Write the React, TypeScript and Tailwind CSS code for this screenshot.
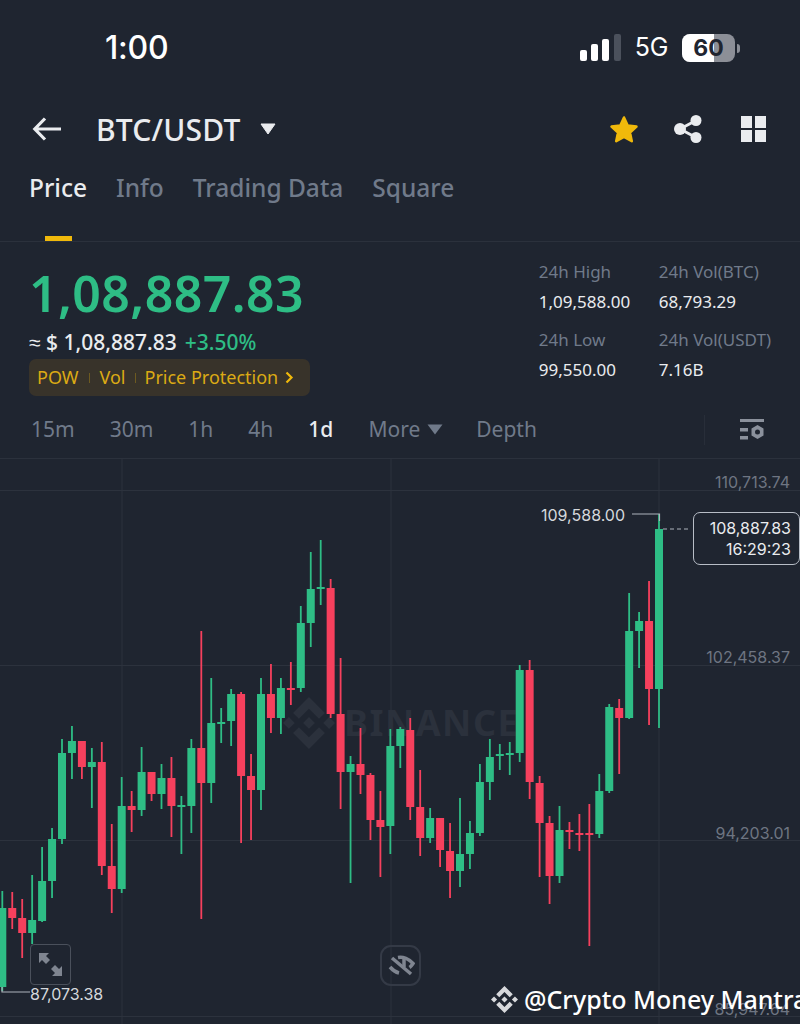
import { SiBinance } from "react-icons/si";

type C = [string, number, number, number, number];
// colour, wick top, body top, body bottom, wick bottom (page y)
const candles: C[] = [
  ["g",890,907,986,990],["r",891,907,917,928],["r",898,917,932,957],["g",874,919,932,943],
  ["g",846,880,920,921],["g",827,838,880,897],["g",738,752,838,843],["g",725,740,752,778],
  ["r",740,740,766,778],["g",747,761,766,807],["r",741,761,865,874],["r",823,865,888,912],
  ["g",776,805,888,892],["r",790,805,809,831],["g",746,771,809,815],["r",771,771,793,800],
  ["g",763,777,793,808],["r",756,777,805,836],["g",795,804,806,853],["g",738,747,805,832],
  ["r",630,747,782,918],["g",677,722,782,802],["g",707,721,723,742],["g",688,693,720,745],
  ["r",691,693,775,842],["r",753,775,789,839],["g",677,693,789,809],["r",663,693,717,732],
  ["g",677,687,717,733],["r",661,687,689,704],["g",605,622,687,691],["g",551,588,622,646],
  ["g",539,586,588,604],["r",578,587,713,717],["r",657,713,771,808],["g",755,763,771,882],
  ["r",727,763,774,793],["r",772,774,819,839],["r",790,819,826,876],["g",728,745,825,853],
  ["g",726,728,745,767],["r",717,729,806,819],["r",769,806,837,855],["g",807,817,837,842],
  ["r",817,817,849,866],["r",822,850,870,897],["g",797,853,870,886],["g",820,832,853,868],
  ["g",763,781,832,835],["g",738,756,781,799],["g",743,753,755,769],["g",741,752,754,774],
  ["g",664,669,752,761],["r",659,669,781,798],["r",775,782,822,876],["r",815,822,875,903],
  ["g",805,829,875,882],["r",821,829,831,848],["r",813,832,834,850],["r",803,832,834,945],
  ["g",773,790,833,837],["g",703,706,790,792],["r",698,707,717,773],["g",592,630,717,718],
  ["g",611,620,630,667],["r",580,620,688,724],["g",513,528,688,727],
];

const GREEN = "#2ebd85";
const RED = "#f6405d";

function Chart() {
  return (
    <svg className="absolute inset-0" width="800" height="566" viewBox="0 458 800 566">
      {[122, 391, 659].map((x) => (
        <line key={x} x1={x} x2={x} y1={458} y2={1024} stroke="#2c323d" strokeWidth="1" />
      ))}
      {[489.5, 664.5, 839.5, 1015.5].map((y) => (
        <line key={y} x1={0} x2={800} y1={y} y2={y} stroke="#2c323d" strokeWidth="1" />
      ))}
      {candles.map((c, i) => {
        const x = 2.3 + i * 9.95;
        const col = c[0] === "g" ? GREEN : RED;
        return (
          <g key={i} fill={col}>
            <rect x={x - 0.9} y={c[1]} width={1.8} height={c[4] - c[1]} />
            <rect x={x - 4} y={c[2]} width={8} height={c[3] - c[2]} />
          </g>
        );
      })}
      <path d="M632 513H659.5V520" stroke="#aeb4bc" strokeWidth="1.2" fill="none" />
      <path d="M663 528H691" stroke="#aeb4bc" strokeWidth="1.2" strokeDasharray="4 3" fill="none" />
      <path d="M2 986V991H30" stroke="#aeb4bc" strokeWidth="1.2" fill="none" />
    </svg>
  );
}

export default function App() {
  const plex = "font-['Noto_Sans',sans-serif]";
  const inter = "font-['Inter',sans-serif]";
  return (
    <div className={`w-[800px] h-[1024px] overflow-hidden bg-[#1f2530] flex flex-col ${plex}`}>
      {/* status bar */}
      <div className={`h-[96px] flex items-center pl-[105px] pr-[60px] ${inter}`}>
        <span className="text-[32px] font-medium text-white tracking-[-0.2px]">1:00</span>
        <div className="ml-auto flex items-center">
          <svg width="42" height="28" viewBox="0 0 42 28">
            <rect x="0" y="16" width="7" height="11" rx="2" fill="#fff" />
            <rect x="11" y="10" width="7" height="17" rx="2" fill="#fff" />
            <rect x="22" y="5" width="7" height="22" rx="2" fill="#fff" />
            <rect x="34" y="0" width="7" height="27" rx="2" fill="#4b515c" />
          </svg>
          <span className="ml-[13px] text-[25px] text-white tracking-[-0.3px]">5G</span>
          <div className="relative ml-[14px] w-[53px] h-[28px] rounded-[8px] overflow-hidden bg-[#8c8f97] flex items-center justify-center">
            <div className="absolute inset-y-0 left-0 w-[32px] bg-white" />
            <span className="relative text-[23px] font-bold text-[#1f2530]">60</span>
          </div>
          <div className="ml-[2px] w-[3px] h-[9px] rounded-r-full bg-[#8c8f97]" />
        </div>
      </div>

      {/* nav */}
      <div className="h-[66px] flex items-center pl-[32px] pr-[34px]">
        <svg width="30" height="26" viewBox="0 0 30 26" fill="none" stroke="#eaecef" strokeWidth="3.2">
          <path d="M29 13H3M13 2.5 2.8 13 13 23.5" />
        </svg>
        <span className="ml-[34px] text-[30px] font-medium text-[#eaecef] tracking-[0.2px]">BTC/USDT</span>
        <svg className="ml-[19px]" width="16" height="12" viewBox="0 0 16 12">
          <path d="M1 1h14L8 11z" fill="#eaecef" stroke="#eaecef" strokeLinejoin="round" />
        </svg>
        <div className="ml-auto flex items-center gap-[36px]">
          <svg width="30" height="29" viewBox="0 0 30 29">
            <path
              d="M15 2.5l3.7 8 8.8 1-6.5 6 1.8 8.7L15 21.8l-7.8 4.4L9 17.500 2.500 11.500l8.800-1z"
              fill="#f0b90b"
              stroke="#f0b90b"
              strokeWidth="2.500"
              strokeLinejoin="round"
            />
          </svg>
          <svg className="-ml-[1px]" width="28" height="28" viewBox="0 0 28 28" fill="#eaecef">
            <circle cx="6" cy="14" r="6" />
            <circle cx="22" cy="5.500" r="5.500" />
            <circle cx="22" cy="22.500" r="5.500" />
            <path d="M6 14 22 5.500M6 14l16 8.500" stroke="#eaecef" strokeWidth="3" />
          </svg>
          <div className="ml-[3px] grid grid-cols-2 gap-[2.500px] w-[25px]">
            <div className="h-[11.500px] bg-[#eaecef]" />
            <div className="h-[11.500px] bg-[#eaecef]" />
            <div className="h-[11.500px] bg-[#eaecef]" />
            <div className="h-[11.500px] bg-[#eaecef]" />
          </div>
        </div>
      </div>

      {/* tabs */}
      <div className="relative h-[80px] border-b border-[#2b313c] flex items-start pt-[8px] pl-[29px] gap-[29px] text-[24.500px] font-medium text-[#707a8a]">
        <span className="text-[#eaecef]">Price</span>
        <span>Info</span>
        <span>Trading Data</span>
        <span>Square</span>
        <div className="absolute left-[45px] bottom-0 w-[27px] h-[5px] bg-[#f0b90b]" />
      </div>

      {/* stats */}
      <div className="h-[161px] flex pl-[29px] pr-[29px]">
        <div className="flex flex-col">
          <div className="h-[72px] mt-[15px] flex items-center text-[50px] font-semibold text-[#2ebd85] leading-none tracking-[0.4px]">
            1,08,887.83
          </div>
          <div className="mt-[-1px] flex items-center gap-[8px] text-[21px] font-medium text-[#eaecef] whitespace-nowrap leading-[28px]">
            <span>≈ $ 1,08,887.83</span>
            <span className="text-[#2ebd85]">+3.50%</span>
          </div>
          <div className="mt-[3px] h-[37px] w-[281px] rounded-[7px] bg-[#38332a] flex items-center pl-[8px] text-[18px] text-[#dcaa14] whitespace-nowrap">
            <span>POW</span>
            <span className="mx-[10px] w-px h-[10px] bg-[#6d5a20]" />
            <span>Vol</span>
            <span className="mx-[9px] w-px h-[10px] bg-[#6d5a20]" />
            <span>Price Protection</span>
            <svg className="ml-[7px]" width="9" height="13" viewBox="0 0 9 13" fill="none" stroke="#f0b90b" strokeWidth="2.200">
              <path d="M1.500 1.500 6.500 6.500 1.500 11.500" />
            </svg>
          </div>
        </div>
        <div className="ml-auto mt-[15px] grid grid-cols-[120px_auto] grid-rows-[30px_38px_30px_36px] text-[17px] whitespace-nowrap">
          <span className="text-[#707a8a] leading-[30px]">24h High</span>
          <span className="text-[#707a8a] leading-[30px]">24h Vol(BTC)</span>
          <span className="text-[#eaecef] leading-[30px]">1,09,588.00</span>
          <span className="text-[#eaecef] leading-[30px]">68,793.29</span>
          <span className="text-[#707a8a] leading-[30px]">24h Low</span>
          <span className="text-[#707a8a] leading-[30px]">24h Vol(USDT)</span>
          <span className="text-[#eaecef] leading-[30px]">99,550.00</span>
          <span className="text-[#eaecef] leading-[30px]">7.16B</span>
        </div>
      </div>

      {/* intervals */}
      <div className="h-[55px] flex items-center pl-[31px] pr-[36px] pb-[2px] text-[21px] text-[#707a8a]">
        <span>15m</span>
        <span className="ml-[35px]">30m</span>
        <span className="ml-[35px]">1h</span>
        <span className="ml-[35px]">4h</span>
        <span className="ml-[35px] font-medium text-[#eaecef]">1d</span>
        <span className="ml-[35px]">More</span>
        <svg className="ml-[7px]" width="16" height="11" viewBox="0 0 16 11">
          <path d="M0.500 0.500h15L8 10.500z" fill="#707a8a" />
        </svg>
        <span className="ml-[33px]">Depth</span>
        <div className="ml-auto w-px h-[30px] bg-[#282e39]" />
        <svg className="ml-[35px]" width="24" height="24" viewBox="0 0 24 24" fill="#8b919c">
          <rect x="0" y="1" width="24" height="3" />
          <rect x="0" y="10" width="8" height="3.500" />
          <rect x="0" y="18" width="8" height="3.500" />
          <path fillRule="evenodd" d="M17.500 7l6 3.500v7l-6 3.500-6-3.500v-7zM17.500 11.500a2.500 2.500 0 1 0 0 5 2.500 2.500 0 0 0 0-5z" />
        </svg>
      </div>

      {/* chart */}
      <div className={`relative flex-1 border-t border-[#2b313c] text-[16px] ${inter}`}>
        <div className="absolute left-[283px] top-[238px] flex items-center gap-[9px] text-[#2b313c]">
          <SiBinance size={52} />
          <span className={`text-[36px] font-bold tracking-[1.500px] leading-none ${plex}`}>BINANCE</span>
        </div>
        <Chart />

        <span className="absolute right-[10px] top-[11px] text-[#6e7582]">110,713.74</span>
        <span className="absolute right-[10px] top-[186px] text-[#6e7582]">102,458.37</span>
        <span className="absolute right-[10px] top-[362px] text-[#6e7582]">94,203.01</span>
        <span className="absolute right-[10px] top-[538px] text-[#6e7582]">85,947.64</span>

        <span className="absolute left-[541px] top-[44px] text-[#d5d8dc]">109,588.00</span>
        <span className="absolute left-[30px] top-[523px] text-[#d5d8dc]">87,073.38</span>

        <div className="absolute left-[693px] top-[53px] w-[107px] h-[53px] rounded-[7px] border border-[#b7bdc6] bg-[#1f2530] pr-[8px] flex flex-col items-end justify-center text-[#eaecef] leading-[21px]">
          <span>108,887.83</span>
          <span>16:29:23</span>
        </div>

        <div className="absolute left-[30px] top-[485px] w-[41px] h-[41px] rounded-[4px] border border-[#4a505b] flex items-center justify-center">
          <svg width="25" height="25" viewBox="0 0 25 25" fill="#7f8590">
            <path d="M1 1h10L8 4l4 4-4 4-4-4-3 3z" />
            <path d="M24 24H14l3-3-4-4 4-4 4 4 3-3z" />
          </svg>
        </div>

        <div className="absolute left-[380px] top-[486px] w-[41px] h-[41px] rounded-[11px] border-2 border-[#343a46] flex items-center justify-center">
          <svg width="28" height="24" viewBox="0 0 28 24" fill="none" stroke="#7f8590" strokeWidth="3.500">
            <path d="M3 13c3 3.500 7 5.500 9 6" />
            <path d="M5 4 24 20" />
            <path d="M11 3.500c5-1 11 1.500 15 6-1 1.500-2 3-3.500 4" />
            <path d="M17 5v8" />
          </svg>
        </div>

        <div className="absolute left-[491px] top-[527px] flex items-center gap-[6px] text-[white]">
          <SiBinance size={27} className="text-[#d8d9dc]" />
          <span className="font-['Noto_Sans',sans-serif] text-[25px] font-medium leading-none whitespace-nowrap">
            @Crypto Money Mantra
          </span>
        </div>
      </div>
    </div>
  );
}
